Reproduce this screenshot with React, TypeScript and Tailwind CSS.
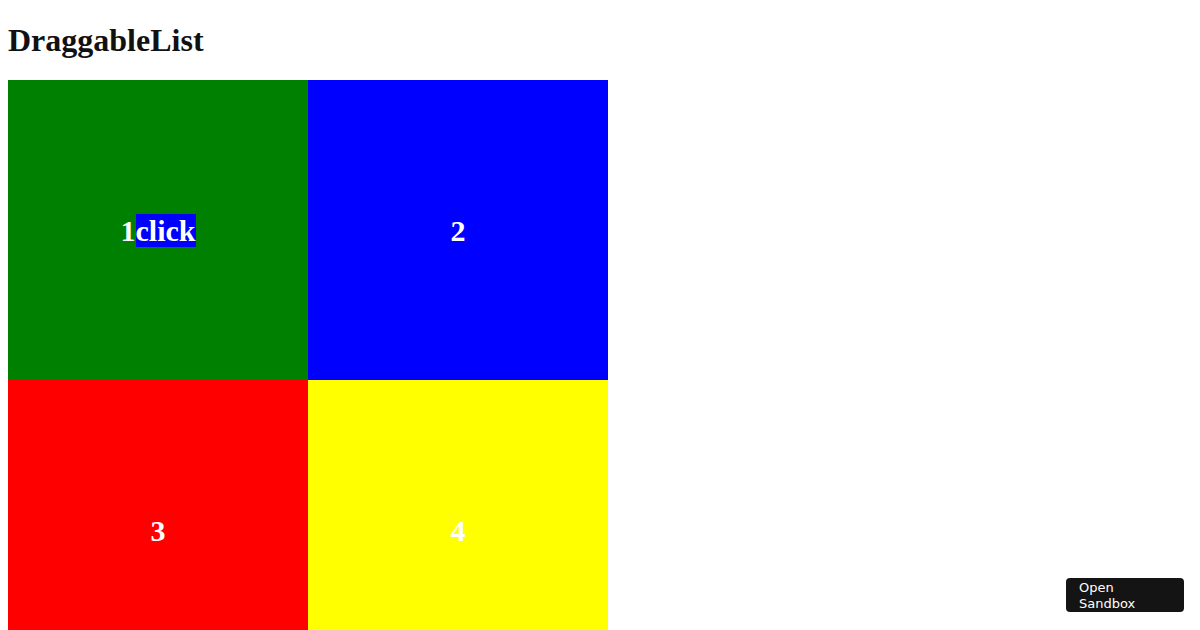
export default function App() {
  const serif = { fontFamily: '"Liberation Serif", "Times New Roman", serif' }
  return (
    <div className="relative h-[630px] w-[1200px] overflow-hidden bg-white px-2" style={serif}>
      <h1 className="pt-[22px] pb-[21px] text-[32px] font-bold leading-[37px] text-[#111]">DraggableList</h1>
      <div className="grid w-[600px] grid-cols-2 text-[30px] leading-[35px] font-bold text-white">
        <div className="flex h-[300px] items-center justify-center bg-[#008000]">
          <div>
            1<span className="bg-[#0000ff]">click</span>
          </div>
        </div>
        <div className="flex h-[300px] items-center justify-center bg-[#0000ff]">2</div>
        <div className="flex h-[300px] items-center justify-center bg-[#ff0000]">3</div>
        <div className="flex h-[300px] items-center justify-center bg-[#ffff00]">4</div>
      </div>
      <div
        className="absolute right-4 bottom-[18px] h-[34px] w-[118px] rounded bg-[#141414] pl-[13px] pt-[2px] text-[13px] leading-4 text-white"
        style={{ fontFamily: '"DejaVu Sans", Verdana, sans-serif' }}
      >
        Open
        <br />
        Sandbox
      </div>
    </div>
  )
}
